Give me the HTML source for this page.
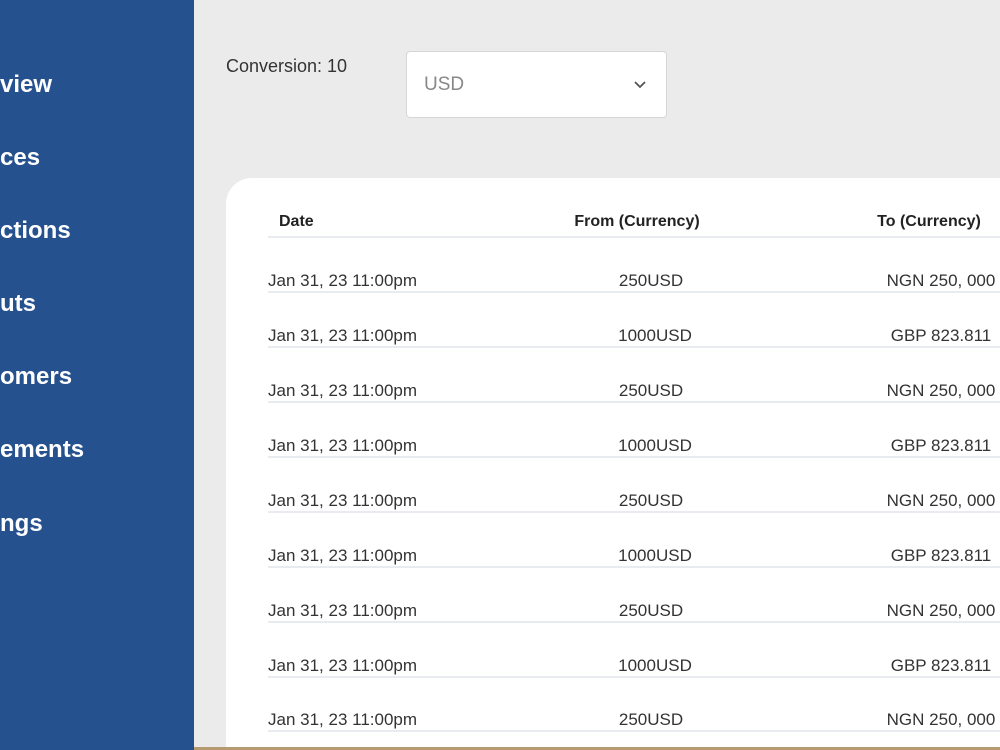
<!DOCTYPE html>
<html><head><style>
*{margin:0;padding:0;box-sizing:border-box}
html,body{width:1000px;height:750px;overflow:hidden}
body{background:#ebebeb;font-family:"Liberation Sans",sans-serif;position:relative}
.side{position:absolute;left:0;top:0;width:194px;height:750px;background:#26518f;overflow:hidden}
.side div{position:absolute;left:0;color:#fff;font-size:24px;font-weight:bold;line-height:28px;white-space:nowrap}
.card{position:absolute;left:226px;top:178px;width:774px;height:572px;background:#fff;border-radius:26px 0 0 0}
.t{position:absolute;font-size:17px;color:#333;white-space:nowrap;line-height:20px}
.c{transform:translateX(-50%)}
.ln{position:absolute;left:268px;width:732px;height:2px;background:#e8ebf0}
.h{font-weight:bold;color:#222;font-size:16px}
</style></head><body>
<div class="side">
<div style="top:71px">view</div>
<div style="top:144px">ces</div>
<div style="top:217px">ctions</div>
<div style="top:290px">uts</div>
<div style="top:363px">omers</div>
<div style="top:436px">ements</div>
<div style="top:510px">ngs</div>
</div>
<div class="t" style="left:226px;top:56px;font-size:18px;color:#333">Conversion: 10</div>
<div style="position:absolute;left:406px;top:51px;width:261px;height:67px;background:#fff;border:1px solid #d6d6d6;border-radius:4px">
<span style="position:absolute;left:17px;top:22px;font-size:19px;color:#888">USD</span>
<svg style="position:absolute;left:226px;top:28px" width="14" height="10" viewBox="0 0 14 10"><path d="M2 2l5 5 5-5" stroke="#555" stroke-width="1.8" fill="none"/></svg>
</div>
<div class="card"></div>
<div class="t h" style="left:279px;top:212px">Date</div>
<div class="t h c" style="left:637px;top:212px">From (Currency)</div>
<div class="t h c" style="left:929px;top:212px">To (Currency)</div>
<div class="ln" style="top:236px"></div>

<div class="t" style="left:268px;top:271px">Jan 31, 23 11:00pm</div><div class="t c" style="left:651px;top:271px">250USD</div><div class="t c" style="left:941px;top:271px">NGN 250, 000</div><div class="ln" style="top:291px"></div>
<div class="t" style="left:268px;top:326px">Jan 31, 23 11:00pm</div><div class="t c" style="left:655px;top:326px">1000USD</div><div class="t c" style="left:941px;top:326px">GBP 823.811</div><div class="ln" style="top:346px"></div>
<div class="t" style="left:268px;top:381px">Jan 31, 23 11:00pm</div><div class="t c" style="left:651px;top:381px">250USD</div><div class="t c" style="left:941px;top:381px">NGN 250, 000</div><div class="ln" style="top:401px"></div>
<div class="t" style="left:268px;top:436px">Jan 31, 23 11:00pm</div><div class="t c" style="left:655px;top:436px">1000USD</div><div class="t c" style="left:941px;top:436px">GBP 823.811</div><div class="ln" style="top:456px"></div>
<div class="t" style="left:268px;top:491px">Jan 31, 23 11:00pm</div><div class="t c" style="left:651px;top:491px">250USD</div><div class="t c" style="left:941px;top:491px">NGN 250, 000</div><div class="ln" style="top:511px"></div>
<div class="t" style="left:268px;top:546px">Jan 31, 23 11:00pm</div><div class="t c" style="left:655px;top:546px">1000USD</div><div class="t c" style="left:941px;top:546px">GBP 823.811</div><div class="ln" style="top:566px"></div>
<div class="t" style="left:268px;top:601px">Jan 31, 23 11:00pm</div><div class="t c" style="left:651px;top:601px">250USD</div><div class="t c" style="left:941px;top:601px">NGN 250, 000</div><div class="ln" style="top:621px"></div>
<div class="t" style="left:268px;top:656px">Jan 31, 23 11:00pm</div><div class="t c" style="left:655px;top:656px">1000USD</div><div class="t c" style="left:941px;top:656px">GBP 823.811</div><div class="ln" style="top:676px"></div>
<div class="t" style="left:268px;top:710px">Jan 31, 23 11:00pm</div><div class="t c" style="left:651px;top:710px">250USD</div><div class="t c" style="left:941px;top:710px">NGN 250, 000</div><div class="ln" style="top:730px"></div>
<div style="position:absolute;left:194px;top:747px;width:806px;height:3px;background:#b59a72"></div>
</body></html>
